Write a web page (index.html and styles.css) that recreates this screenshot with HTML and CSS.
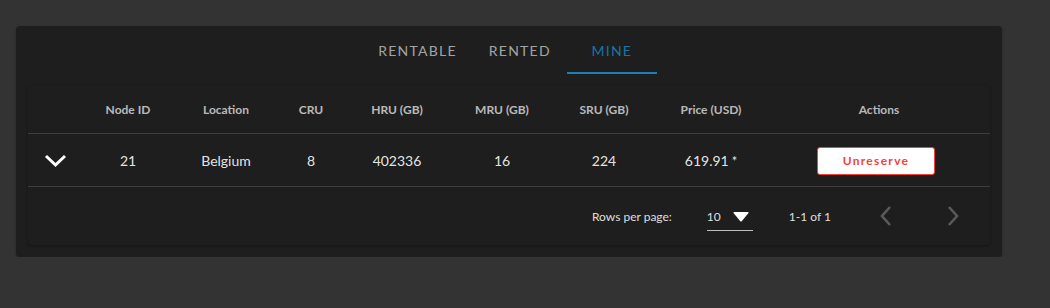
FILE: index.html
```html
<!DOCTYPE html>
<html>
<head>
<meta charset="utf-8">
<link rel="stylesheet" href="styles.css">
</head>
<body>
<div class="page">
  <div class="card">
    <div class="tabs">
      <div class="tab">RENTABLE</div>
      <div class="tab">RENTED</div>
      <div class="tab active">MINE</div>
    </div>
    <div class="content">
      <div class="table">
        <div class="row head">
          <div class="cell"></div>
          <div class="cell">Node ID</div>
          <div class="cell">Location</div>
          <div class="cell">CRU</div>
          <div class="cell">HRU (GB)</div>
          <div class="cell">MRU (GB)</div>
          <div class="cell">SRU (GB)</div>
          <div class="cell">Price (USD)</div>
          <div class="cell">Actions</div>
        </div>
        <div class="row data">
          <div class="cell">
            <svg class="expand" width="24" height="14" viewBox="0 0 24 14"><polyline points="2,2 11.5,11 21,2" fill="none" stroke="#ffffff" stroke-width="3"/></svg>
          </div>
          <div class="cell">21</div>
          <div class="cell">Belgium</div>
          <div class="cell">8</div>
          <div class="cell">402336</div>
          <div class="cell">16</div>
          <div class="cell">224</div>
          <div class="cell">619.91 <span class="star">*</span></div>
          <div class="cell"><button class="btn">Unreserve</button></div>
        </div>
        <div class="footer">
          <div class="rows-label">Rows per page:</div>
          <div class="select">
            <span class="sel-val">10</span>
            <svg class="tri" width="16" height="10" viewBox="0 0 16 10"><path d="M0.5 1 Q0 0 1.5 0 L14.5 0 Q16 0 15.5 1 L8.7 9.2 Q8 10 7.3 9.2 Z" fill="#ffffff"/></svg>
          </div>
          <div class="page-text">1-1 of 1</div>
          <div class="nav">
            <svg width="16" height="22" viewBox="0 0 16 22"><polyline points="12,2 4,11 12,20" fill="none" stroke="#5a5a5a" stroke-width="2.6"/></svg>
          </div>
          <div class="nav next">
            <svg width="16" height="22" viewBox="0 0 16 22"><polyline points="4,2 12,11 4,20" fill="none" stroke="#5a5a5a" stroke-width="2.6"/></svg>
          </div>
        </div>
      </div>
    </div>
  </div>
</div>
</body>
</html>
```

FILE: styles.css
```css
html, body {
  margin: 0;
  padding: 0;
  background: #333333;
  font-family: Lato, "Noto Sans", sans-serif;
}
.page {
  padding: 26px 0 0 16px;
}
.card {
  width: 986px;
  background: #1e1e1e;
  border-radius: 4px;
  box-shadow: 0 2px 3px rgba(0,0,0,0.25);
}
.tabs {
  height: 48px;
  display: flex;
  justify-content: center;
  padding-left: 1px;
}
.tab {
  min-width: 90px;
  padding: 0 16px;
  box-sizing: border-box;
  display: flex;
  align-items: center;
  justify-content: center;
  font-size: 14px;
  letter-spacing: 1.25px;
  color: rgba(255,255,255,0.6);
  border-bottom: 2px solid transparent;
  padding-top: 2px;
}
.tab.active {
  color: #1c74a6;
  border-bottom-color: #1a80b8;
}
.content {
  padding: 12px;
}
.table {
  background: #1e1e1e;
  border-radius: 4px;
  box-shadow: 0 1px 3px rgba(0,0,0,0.35);
}
.row {
  display: grid;
  grid-template-columns: 54px 92px 104px 66px 106px 104px 100px 114px 222px;
  border-bottom: 1px solid #3d3d3d;
}
.cell {
  display: flex;
  align-items: center;
  justify-content: center;
}
.head {
  height: 47px;
}
.head .cell {
  font-size: 12px;
  font-weight: 700;
  color: rgba(255,255,255,0.7);
}
.data {
  height: 52px;
}
.data .cell {
  font-size: 14px;
  color: rgba(255,255,255,0.9);
  padding-top: 1px;
}
.expand {
  margin-left: 1px;
}
.star {
  font-size: 13px;
  margin-left: 3px;
}
.btn {
  width: 118px;
  height: 28px;
  background: #ffffff;
  border: 1px solid #f44336;
  border-radius: 3px;
  color: #f44336;
  font-family: Lato, sans-serif;
  font-size: 12px;
  font-weight: 700;
  letter-spacing: 1.3px;
  padding: 0;
  margin-left: -6px;
}
.footer {
  height: 58px;
  display: flex;
  align-items: center;
  justify-content: flex-end;
  padding-right: 17px;
  font-size: 12px;
  color: rgba(255,255,255,0.87);
}
.select {
  width: 46px;
  height: 30px;
  margin-left: 35px;
  border-bottom: 1px solid #bdbdbd;
  display: flex;
  align-items: center;
  box-sizing: border-box;
  padding-top: 2px;
}
.sel-val {
  font-size: 12px;
  width: 26px;
}
.page-text {
  margin-left: 36px;
  font-size: 12px;
}
.nav {
  width: 40px;
  height: 40px;
  display: flex;
  align-items: center;
  justify-content: center;
  margin-left: 35px;
}
.nav.next {
  margin-left: 27px;
}
```
